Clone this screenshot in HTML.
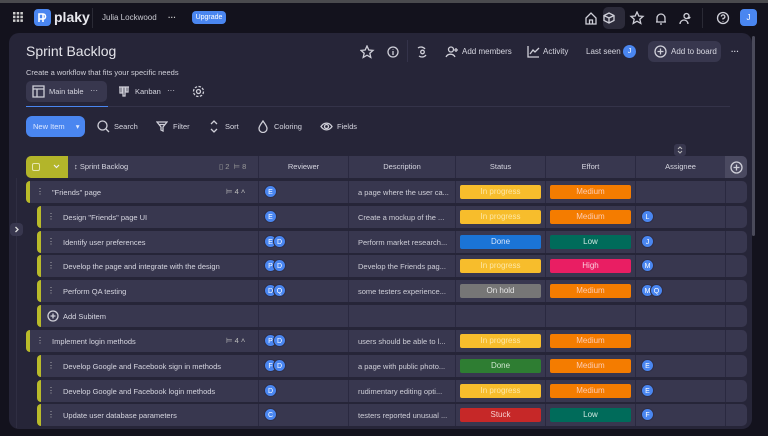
<!DOCTYPE html>
<html><head><style>
*{box-sizing:border-box;margin:0;padding:0}
body{width:768px;height:436px;background:#13121d;font-family:"Liberation Sans",sans-serif;color:#d6d6e0;position:relative;overflow:hidden;font-size:8px}
.abs{position:absolute}
.top{left:0;top:0;width:768px;height:3px;background:#4a4a4e}
.panel{left:9px;top:33px;width:743px;height:396px;background:#262538;border-radius:10px}
.sb{left:752px;top:36px;width:3px;height:200px;background:#4a4a5a;border-radius:2px}
.av{display:inline-block;width:13px;height:13px;border-radius:50%;background:#4a86f0;color:#fff;font-size:7px;text-align:center;line-height:13px;border:1px solid #2f2e45;margin-right:-4px}
.row{position:absolute;height:22px;background:#38374f;border-radius:5px;right:21px}
.bar{position:absolute;left:0;top:0;width:4px;height:22px;background:#b9bb2a;border-radius:4px 0 0 4px}
.c{position:absolute;top:0;height:22px;line-height:22px;border-left:1px solid #2a2940}
.chip{position:absolute;top:4px;height:14px;line-height:14px;text-align:center;color:#f0f0f0;font-size:8px;border-radius:2px}
.ic{stroke:#cfcfd8;fill:none;stroke-width:1.3}
.dots{font-size:9px;letter-spacing:-1px}
</style></head><body>
<div class="abs top"></div>
<svg class="abs" style="left:13px;top:12px" width="10" height="10"><g fill="#ccc"><rect x="0" y="0" width="2.5" height="2.5"/><rect x="3.7" y="0" width="2.5" height="2.5"/><rect x="7.4" y="0" width="2.5" height="2.5"/><rect x="0" y="3.7" width="2.5" height="2.5"/><rect x="3.7" y="3.7" width="2.5" height="2.5"/><rect x="7.4" y="3.7" width="2.5" height="2.5"/><rect x="0" y="7.4" width="2.5" height="2.5"/><rect x="3.7" y="7.4" width="2.5" height="2.5"/><rect x="7.4" y="7.4" width="2.5" height="2.5"/></g></svg>
<div class="abs" style="left:34px;top:9px;width:17px;height:17px;background:#4a86f0;border-radius:4px"></div>
<svg class="abs" style="left:37px;top:12px" width="11" height="11"><path d="M2 10V2h4a2.5 2.5 0 0 1 0 5H2M6 2v8" stroke="#fff" stroke-width="1.6" fill="none"/></svg>
<div class="abs" style="left:54px;top:9px;font-size:14px;font-weight:bold;color:#e8e8ee">plaky</div>
<div class="abs" style="left:92px;top:8px;width:1px;height:20px;background:#2a2a35"></div>
<div class="abs" style="left:102px;top:13px;color:#c8c8d0">Julia Lockwood</div>
<div class="abs" style="left:168px;top:13px;color:#ccc;font-size:8px;font-weight:bold">···</div>
<div class="abs" style="left:192px;top:11px;width:34px;height:13px;background:#4a86f0;border-radius:4px;color:#fff;font-size:7px;text-align:center;line-height:13px">Upgrade</div>
<div class="abs" style="left:603px;top:7px;width:22px;height:22px;background:#2c2b3a;border-radius:5px"></div>
<svg class="abs" style="left:584px;top:11px" width="150" height="14">
<path class="ic" d="M2 7L7 2l5 5v6H2z M5.5 13V9h3v4"/>
<path class="ic" d="M25 2l5 2.5v5L25 12l-5-2.5v-5zM20 4.5l5 2.5 5-2.5M25 7v5"/>
<path class="ic" d="M53 1l1.8 4 4.2.4-3.2 2.8 1 4.2-3.8-2.2-3.8 2.2 1-4.2-3.2-2.8 4.2-.4z"/>
<path class="ic" d="M73 11V7a4 4 0 0 1 8 0v4h-9h10M76 13h2"/>
<path class="ic" d="M100 5a2.5 2.5 0 1 1 0 .1M96 13a4 4 0 0 1 8 0M105 5v3M103.5 6.5h3"/>
<circle class="ic" cx="139" cy="7" r="5.5"/><path class="ic" d="M137.3 5.5a1.8 1.8 0 1 1 1.7 2v1M139 10v.6"/>
</svg>
<div class="abs" style="left:702px;top:8px;width:1px;height:20px;background:#2a2a35"></div>
<div class="abs" style="left:740px;top:9px;width:17px;height:17px;background:#4a86f0;border-radius:4px;color:#fff;font-size:8px;text-align:center;line-height:17px">J</div>

<div class="abs panel"></div>
<div class="abs sb"></div>
<div class="abs" style="left:26px;top:43px;font-size:14px;color:#e4e4ea">Sprint Backlog</div>
<div class="abs" style="left:26px;top:68px;font-size:7.5px;color:#cfcfd8">Create a workflow that fits your specific needs</div>
<svg class="abs" style="left:360px;top:45px" width="75" height="14">
<path class="ic" d="M7 1l1.8 4 4.2.4-3.2 2.8 1 4.2-3.8-2.2-3.8 2.2 1-4.2-3.2-2.8 4.2-.4z"/>
<circle class="ic" cx="33" cy="7" r="5"/><path class="ic" d="M33 6v4M33 4v.5"/>
<path class="ic" d="M58 3a5 5 0 0 1 7 1M66 10a5 5 0 0 1-7 1"/><circle class="ic" cx="62.5" cy="7" r="1.8"/>
</svg>
<div class="abs" style="left:407px;top:40px;width:1px;height:22px;background:#34334a"></div>
<svg class="abs" style="left:445px;top:45px" width="14" height="14"><circle class="ic" cx="6" cy="4.5" r="2.5"/><path class="ic" d="M1 12a5 5 0 0 1 9 0M11 3v4M9 5h4"/></svg>
<div class="abs" style="left:462px;top:47px">Add members</div>
<svg class="abs" style="left:527px;top:45px" width="13" height="13"><path class="ic" d="M1 1v11h11M3 9l3-4 2 2 4-4"/></svg>
<div class="abs" style="left:543px;top:47px">Activity</div>
<div class="abs" style="left:586px;top:47px">Last seen</div>
<div class="abs" style="left:623px;top:45px;width:13px;height:13px;border-radius:50%;background:#4a86f0;color:#fff;font-size:7px;text-align:center;line-height:13px">J</div>
<div class="abs" style="left:648px;top:41px;width:73px;height:21px;background:#38374e;border-radius:6px"></div>
<svg class="abs" style="left:654px;top:45px" width="13" height="13"><circle class="ic" cx="6.5" cy="6.5" r="5.5"/><path class="ic" d="M6.5 3.5v6M3.5 6.5h6"/></svg>
<div class="abs" style="left:671px;top:47px">Add to board</div>
<div class="abs" style="left:731px;top:47px;font-size:8px;font-weight:bold">···</div>

<div class="abs" style="left:26px;top:81px;width:81px;height:21px;background:#38374e;border-radius:5px"></div>
<svg class="abs" style="left:32px;top:85px" width="13" height="13"><path class="ic" d="M1 1h11v11H1zM1 4h11M5 4v8"/></svg>
<div class="abs" style="left:49px;top:87px;font-size:7.5px">Main table</div>
<div class="abs" style="left:90px;top:86px;font-size:8px">···</div>
<svg class="abs" style="left:118px;top:86px" width="12" height="11"><path class="ic" d="M1 1h10M2 1v6h2V1M5 1v9h2V1M8 1v5h2V1"/></svg>
<div class="abs" style="left:135px;top:87px;font-size:7.5px">Kanban</div>
<div class="abs" style="left:167px;top:86px;font-size:8px">···</div>
<svg class="abs" style="left:192px;top:85px" width="13" height="13"><circle class="ic" cx="6.5" cy="6.5" r="2"/><circle class="ic" cx="6.5" cy="6.5" r="5" stroke-dasharray="2.5 1.4"/></svg>
<div class="abs" style="left:26px;top:106px;width:82px;height:1px;background:#4a86f0"></div>
<div class="abs" style="left:108px;top:106px;width:622px;height:1px;background:#343349"></div>

<div class="abs" style="left:26px;top:116px;width:59px;height:21px;background:#4a86f0;border-radius:6px;color:#dfe9ff;font-size:7.5px;line-height:21px;padding-left:7px">New Item <span style="margin-left:9px">▾</span></div>
<svg class="abs" style="left:97px;top:120px" width="13" height="13"><circle class="ic" cx="5.5" cy="5.5" r="4.5"/><path class="ic" d="M9 9l3 3"/></svg>
<div class="abs" style="left:114px;top:122px;font-size:7.5px">Search</div>
<svg class="abs" style="left:156px;top:121px" width="12" height="11"><path class="ic" d="M1 1h10L7 6v4L5 9V6zM3 3.5h6"/></svg>
<div class="abs" style="left:173px;top:122px;font-size:7.5px">Filter</div>
<svg class="abs" style="left:210px;top:120px" width="8" height="13"><path class="ic" d="M1 4l3-3 3 3M1 9l3 3 3-3"/></svg>
<div class="abs" style="left:225px;top:122px;font-size:7.5px">Sort</div>
<svg class="abs" style="left:258px;top:120px" width="10" height="13"><path class="ic" d="M5 1C3 4 1 6 1 8.5a4 4 0 0 0 8 0C9 6 7 4 5 1z"/></svg>
<div class="abs" style="left:274px;top:122px;font-size:7.5px">Coloring</div>
<svg class="abs" style="left:320px;top:121px" width="13" height="11"><path class="ic" d="M1 5.5C4 1 9 1 12 5.5 9 10 4 10 1 5.5z"/><circle class="ic" cx="6.5" cy="5.5" r="2"/></svg>
<div class="abs" style="left:337px;top:122px;font-size:7.5px">Fields</div>

<svg class="abs" style="left:674px;top:144px" width="12" height="12"><rect width="12" height="12" rx="3" fill="#38374e"/><path d="M4 5l2-2 2 2M4 7l2 2 2-2" stroke="#bbb" fill="none"/></svg>
<div class="abs" style="left:16px;top:178px;width:1px;height:250px;background:#2f2e42"></div>
<svg class="abs" style="left:10px;top:223px" width="13" height="13"><rect width="13" height="13" rx="4" fill="#38374e"/><path d="M5.5 4l2.5 2.5-2.5 2.5" stroke="#ddd" stroke-width="1.3" fill="none"/></svg>

<div class="row" style="top:156px;left:26px;height:22px;right:21px;background:#38374f"></div>
<div class="abs" style="left:26px;top:156px;width:42px;height:22px;background:#b3b52a;border-radius:5px 0 0 5px"></div>
<div class="abs" style="left:32px;top:163px;width:8px;height:8px;border:1px solid #e6e6b0;border-radius:2px"></div>
<svg class="abs" style="left:53px;top:164px" width="7" height="5"><path d="M1 1l2.5 2.5L6 1" stroke="#eee" stroke-width="1.2" fill="none"/></svg>
<div class="abs" style="left:74px;top:162px;font-size:7.5px">↕ Sprint Backlog</div>
<div class="abs" style="left:219px;top:162px;font-size:7.5px;color:#999">▯ 2 &nbsp;⊨ 8</div>
<div class="abs" style="left:725px;top:156px;width:22px;height:22px;background:#4a4960;border-radius:0 5px 5px 0"></div>
<svg class="abs" style="left:730px;top:161px" width="13" height="13"><circle class="ic" cx="6.5" cy="6.5" r="5.5"/><path class="ic" d="M6.5 3.5v6M3.5 6.5h6"/></svg>
<div class="abs" style="left:258px;top:156px;width:467px;height:22px;font-size:7.5px;line-height:22px">
<div class="c" style="left:0;width:90px;text-align:center">Reviewer</div>
<div class="c" style="left:90px;width:107px;text-align:center">Description</div>
<div class="c" style="left:197px;width:90px;text-align:center">Status</div>
<div class="c" style="left:287px;width:90px;text-align:center">Effort</div>
<div class="c" style="left:377px;width:90px;text-align:center">Assignee</div>
</div>

<div id="rows"></div>
<script>
const C={ip:['In progress','#f7bd2c','#fde7a6'],med:['Medium','#f47c00','#fdcdb4'],done:['Done','#1b74d6','#d4e4fb'],dg:['Done','#2e7d32','#cfe6cf'],low:['Low','#006b5a','#cce6df'],high:['High','#e91e63','#fbd0df'],hold:['On hold','#767676','#e6e6e6'],stuck:['Stuck','#c62828','#f6d0d0']};
const R=[
[181,0,'"Friends" page','E','a page where the user ca...','ip','med','',1],
[206,1,'Design "Friends" page UI','E','Create a mockup of the ...','ip','med','L'],
[231,1,'Identify user preferences','ED','Perform market research...','done','low','J'],
[255,1,'Develop the page and integrate with the design','PD','Develop the Friends pag...','ip','high','M'],
[280,1,'Perform QA testing','DQ','some testers experience...','hold','med','MQ'],
[305,2,'Add Subitem','','','','',''],
[330,0,'Implement login methods','PD','users should be able to l...','ip','med','',1],
[355,1,'Develop Google and Facebook sign in methods','FD','a page with public photo...','dg','med','E'],
[380,1,'Develop Google and Facebook login methods','D','rudimentary editing opti...','ip','med','E'],
[404,1,'Update user database parameters','C','testers reported unusual ...','stuck','low','F']];
let h='';
for(const r of R){
 const L=r[1]==0?26:37, top=r[0];
 h+=`<div class="row" style="top:${top}px;left:${L}px"><div class="bar"></div></div>`;
 if(r[1]==2){h+=`<svg class="abs" style="left:47px;top:${top+5}px" width="12" height="12"><circle class="ic" cx="6" cy="6" r="5"/><path class="ic" d="M6 3.5v5M3.5 6h5"/></svg><div class="abs" style="left:63px;top:${top+7}px;font-size:7.5px">Add Subitem</div>`;}
 else{
 h+=`<div class="abs" style="left:${L+10}px;top:${top+6}px;font-size:8px;color:#bbb">⋮</div><div class="abs" style="left:${L+26}px;top:${top+7}px;font-size:7.5px">${r[2]}</div>`;
 if(r[8])h+=`<div class="abs" style="left:226px;top:${top+6}px;font-size:7.5px;color:#bbb">⊨ 4 ˄</div>`;
 }
 h+=`<div class="abs" style="left:258px;top:${top}px;width:467px;height:22px">`;
 [0,90,197,287,377,467].forEach(x=>h+=`<div class="c" style="left:${x}px;width:1px"></div>`);
 h+=`<div class="abs" style="left:6px;top:4px">${[...r[3]].map(a=>`<span class="av">${a}</span>`).join('')}</div>`;
 h+=`<div class="abs" style="left:100px;top:7px;font-size:7.5px;color:#cfcfd8">${r[4]}</div>`;
 if(r[5])h+=`<div class="chip" style="left:202px;width:81px;background:${C[r[5]][1]};color:${C[r[5]][2]}">${C[r[5]][0]}</div>`;
 if(r[6])h+=`<div class="chip" style="left:292px;width:81px;background:${C[r[6]][1]};color:${C[r[6]][2]}">${C[r[6]][0]}</div>`;
 h+=`<div class="abs" style="left:383px;top:4px">${[...r[7]].map(a=>`<span class="av">${a}</span>`).join('')}</div></div>`;
}
document.getElementById('rows').innerHTML=h;
</script>
</body></html>
